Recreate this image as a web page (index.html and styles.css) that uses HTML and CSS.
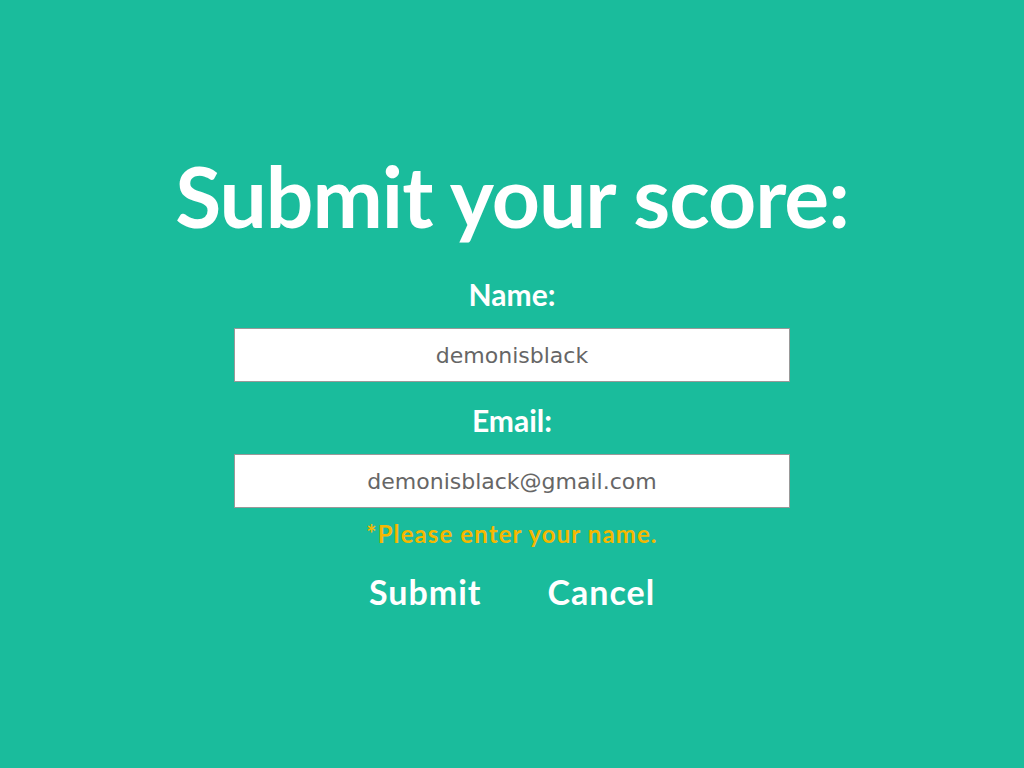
FILE: index.html
```html
<!DOCTYPE html>
<html lang="en">
<head>
    <meta charset="UTF-8">
    <meta name="viewport" content="width=device-width, initial-scale=1.0">
    <title>Submit your score</title>
    <link rel="stylesheet" href="styles.css">
</head>
<body>
    <div class="score-form">
        <h1 class="score-title">Submit your score:</h1>
        <label class="field-label" for="playerName">Name:</label>
        <input id="playerName" class="field-input" type="text" value="demonisblack">
        <label class="field-label" for="playerEmail">Email:</label>
        <input id="playerEmail" class="field-input" type="text" value="demonisblack@gmail.com">
        <div class="form-error">*Please enter your name.</div>
        <div class="form-buttons">
            <button class="form-button" type="button">Submit</button>
            <button class="form-button" type="button">Cancel</button>
        </div>
    </div>
</body>
</html>
```

FILE: styles.css
```css
body {
    margin: 0;
    padding: 0;
    height: 100vh;
    background-color: #1abc9c;
    font-family: Lato, "Open Sans", sans-serif;
    color: #fff;
}
.score-form {
    display: flex;
    flex-direction: column;
    align-items: center;
    padding-top: 146px;
}
.score-title {
    margin: 0;
    font-size: 84px;
    font-weight: 700;
    line-height: 100px;
    letter-spacing: -1px;
}
.field-label {
    display: block;
    margin-top: 20px;
    font-size: 30px;
    font-weight: 700;
    line-height: 36px;
}
.score-title + .field-label {
    margin-top: 30px;
}
.field-input {
    box-sizing: border-box;
    width: 556px;
    height: 54px;
    margin-top: 16px;
    border: 1px solid #999;
    background: #fff;
    text-align: center;
    font-family: "DejaVu Sans", Verdana, sans-serif;
    font-size: 22px;
    color: #666;
    outline: none;
}
.form-error {
    margin-top: 11px;
    font-size: 24px;
    font-weight: 700;
    letter-spacing: 1.1px;
    color: #f5b800;
}
.form-buttons {
    display: flex;
    gap: 66px;
    margin-top: 23px;
}
.form-button {
    padding: 0;
    border: none;
    background: none;
    font-family: inherit;
    font-size: 34px;
    font-weight: 700;
    letter-spacing: 1px;
    color: #fff;
    cursor: pointer;
}
```
